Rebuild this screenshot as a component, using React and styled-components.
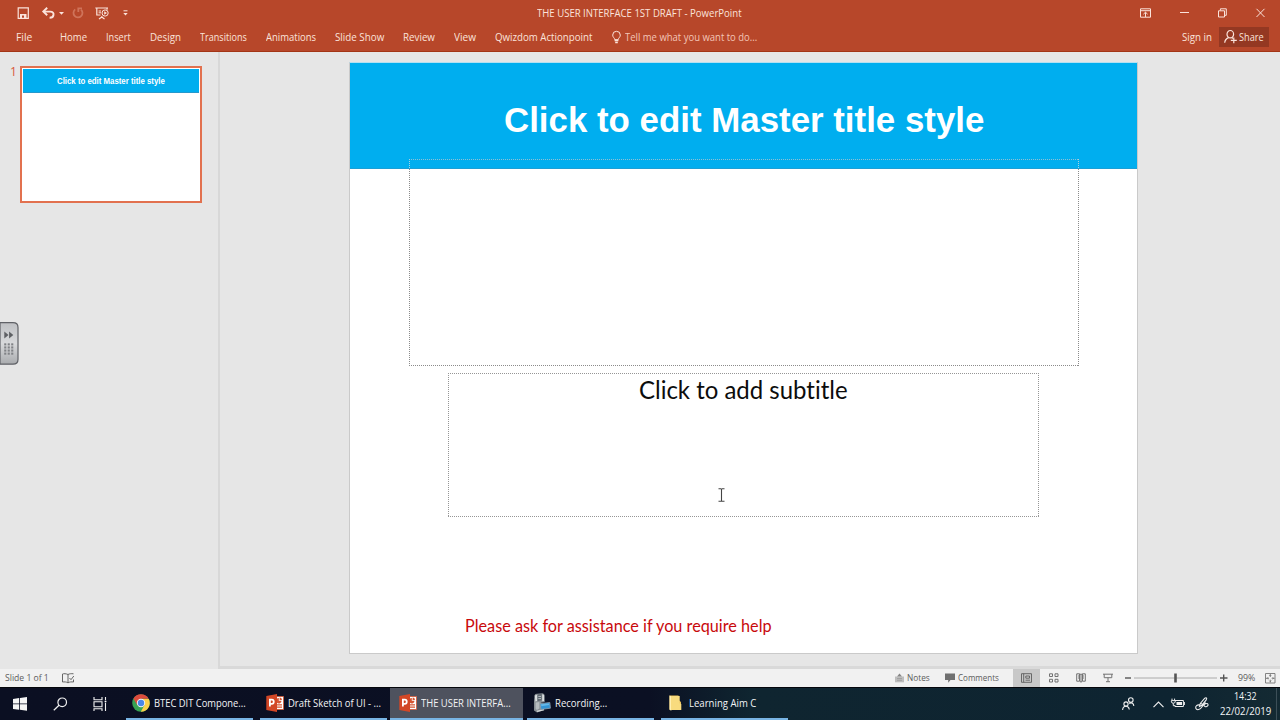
import React, { useLayoutEffect, useRef, useState } from "react";
import styled, { createGlobalStyle } from "styled-components";

const ui = '"Open Sans", "Noto Sans", sans-serif';
const slideFont = 'Lato, "Open Sans", sans-serif';

const GlobalStyle = createGlobalStyle`
  * { box-sizing: border-box; }
  body { margin: 0; overflow: hidden; font-family: ${ui}; font-variant-ligatures: none; }
  svg { display: block; flex: none; overflow: visible; }
`;

/* ---------- text that fills a given width ---------- */
const FitBox = styled.span`
  display: block;
  flex: none;
  width: ${(p) => p.$w}px;
  white-space: nowrap;
  font-family: ${(p) => p.$font || "inherit"};
  font-size: ${(p) => p.$size || 11}px;
  font-weight: ${(p) => p.$weight || 400};
  color: ${(p) => p.$color || "inherit"};
  line-height: ${(p) => p.$lh || 16}px;
`;
const FitInner = styled.span`
  display: inline-block;
  transform-origin: 0 50%;
`;
function Fit({ w, size, color, font, weight, lh, children }) {
  const ref = useRef(null);
  const [scale, setScale] = useState(1);
  useLayoutEffect(() => {
    const measure = () => ref.current && setScale(w / ref.current.offsetWidth);
    measure();
    document.fonts?.ready.then(measure);
  }, [w, children]);
  return (
    <FitBox $w={w} $size={size} $color={color} $font={font} $weight={weight} $lh={lh}>
      <FitInner ref={ref} style={{ transform: `scaleX(${scale})` }}>{children}</FitInner>
    </FitBox>
  );
}

/* ---------- frame ---------- */
const Screen = styled.div`
  width: 1280px;
  height: 720px;
  display: flex;
  flex-direction: column;
  overflow: hidden;
  background: #e6e6e6;
`;
const Header = styled.header`
  height: 52px;
  flex: none;
  background: #b7472a;
  border-bottom: 1px solid #a33516;
  color: #fbe3db;
`;
const TitleBar = styled.div`
  height: 26px;
  display: grid;
  grid-template-columns: 537px 1fr auto;
  align-items: center;
`;
const QuickAccess = styled.div`
  display: flex;
  align-items: center;
  padding-left: 17px;
`;
const WindowButtons = styled.div`
  display: flex;
  align-items: center;
  gap: 29px;
  padding-right: 15px;
`;
const Ribbon = styled.nav`
  height: 22px;
  display: flex;
  align-items: center;
  padding: 0 11px 0 16px;
`;
const Tabs = styled.div`
  display: flex;
  gap: 19px;
  margin-left: 28px;
`;
const TellMe = styled.div`
  display: flex;
  align-items: center;
  gap: 4px;
  margin-left: 20px;
`;
const Account = styled.div`
  display: flex;
  align-items: center;
  gap: 7px;
  margin-left: auto;
`;
const ShareButton = styled.div`
  display: flex;
  align-items: center;
  gap: 2px;
  width: 50px;
  height: 20px;
  padding-left: 5px;
  background: #943822;
`;

/* ---------- workspace ---------- */
const Workspace = styled.main`
  flex: 1;
  min-height: 0;
  display: flex;
`;
const Outline = styled.aside`
  position: relative;
  width: 220px;
  flex: none;
  display: flex;
  align-items: flex-start;
  gap: 4px;
  padding: 14px 0 0 10px;
  border-right: 2px solid #d8d8d8;
`;
const SlideNumber = styled.span`
  width: 6px;
  color: #d9583a;
  font: 12px/12px "Open Sans", sans-serif;
`;
const Thumb = styled.div`
  width: 182px;
  height: 137px;
  border: 2px solid #e2714f;
  background: #fff;
  padding: 1px 1px 0;
`;
const ThumbTitle = styled.div`
  display: flex;
  justify-content: center;
  height: 24px;
  padding-top: 7px;
  background: #00aeef;
  border-bottom: 1px solid #2698cc;
`;
const SideHandle = styled.div`
  position: absolute;
  left: 0;
  top: 270px;
`;
const Stage = styled.section`
  flex: 1;
  padding: 10px 0 0 129px;
  border-bottom: 3px solid #d9d9d9;
`;
const Slide = styled.article`
  position: relative;
  width: 789px;
  height: 592px;
  border: 1px solid #cacaca;
  border-top-color: #b4e0f2;
  background: #fff;
`;
const SlideTitle = styled.div`
  display: flex;
  justify-content: center;
  height: 106px;
  padding-top: 37px;
  background: #00aeef;
  border-bottom: 1px solid #1a9fd6;
`;
const Placeholder = styled.div`
  position: absolute;
  left: ${(p) => p.$x}px;
  top: ${(p) => p.$y}px;
  width: ${(p) => p.$w}px;
  height: ${(p) => p.$h}px;
  display: flex;
  justify-content: center;
`;
const Outlined = styled.svg`
  position: absolute;
  inset: 0;
`;
const Footnote = styled.div`
  position: absolute;
  left: 115px;
  top: 553px;
`;
const Pointer = styled.div`
  position: absolute;
  left: 368px;
  top: 425px;
`;

/* ---------- status bar ---------- */
const StatusBar = styled.footer`
  height: 18px;
  flex: none;
  display: flex;
  align-items: center;
  background: #f1f1f1;
  color: #5c5c5c;
  padding-left: 5px;
`;
const StatusItem = styled.div`
  display: flex;
  align-items: center;
  gap: ${(p) => p.$gap || 4}px;
  margin-left: ${(p) => p.$ml}px;
`;
const ViewButton = styled.div`
  display: flex;
  align-items: center;
  justify-content: center;
  width: 27px;
  height: 18px;
  background: ${(p) => (p.$active ? "#c8c8c8" : "transparent")};
`;

/* ---------- task bar ---------- */
const TaskBar = styled.footer`
  height: 33px;
  flex: none;
  display: flex;
  border-top: 1px solid #05070c;
  background: linear-gradient(90deg, #0b0f22 0, #0b1023 650px, #0f2530 750px, #0e2431 1180px, #142a33 1280px);
  color: #f2f4f6;
`;
const SystemButtons = styled.div`
  display: flex;
  align-items: center;
  width: 126px;
  padding-left: 13px;
`;
const Task = styled.div`
  display: flex;
  align-items: center;
  gap: ${(p) => p.$gap}px;
  width: ${(p) => p.$w}px;
  margin-right: ${(p) => p.$mr}px;
  padding-left: ${(p) => p.$pl}px;
  background: ${(p) => (p.$active ? "#4e525e" : "transparent")};
  border-bottom: 2px solid #78b4e4;
`;
const Tray = styled.div`
  display: flex;
  align-items: center;
  margin-left: auto;
  padding-right: 5px;
  border-right: 1px solid #3c4f58;
  margin-right: 3px;
`;
const Clock = styled.div`
  display: flex;
  flex-direction: column;
  align-items: center;
  margin-left: 11px;
  padding-bottom: 2px;
`;
const Space = styled.span`
  flex: none;
  width: ${(p) => p.$w}px;
`;

/* ---------- icons ---------- */
const Ico = ({ w, h, children, c = "#fbe3db", sw = 1 }) => (
  <svg width={w} height={h} viewBox={`0 0 ${w} ${h}`} fill="none" stroke={c} strokeWidth={sw}>{children}</svg>
);
const SaveIcon = () => (
  <Ico w={12} h={12} sw={1.2}>
    <path d="M1.2 .8H11.3V11.3H1.2Z" />
    <path d="M3 7H9.5V11H7V8.6H5V11H3Z" fill="#fbe3db" stroke="none" />
  </Ico>
);
const UndoIcon = () => (
  <Ico w={13} h={12}>
    <path d="M2 4.6H8.2C10.8 4.6 11.8 6 11.5 7.8C11.3 9.6 9.8 10.8 7.6 10.8" strokeWidth="1.9" />
    <path d="M5.2 .8L1.3 4.5L5.2 8.3" strokeWidth="1.9" />
  </Ico>
);
const RedoIcon = () => (
  <Ico w={12} h={12} c="#cf735a" sw={1.8}>
    <path d="M3.2 2.4A4.5 4.5 0 1 0 9 2.6" />
    <path d="M6.3 5V1.3H10" />
  </Ico>
);
const ShowIcon = () => (
  <Ico w={14} h={13}>
    <path d="M.3 1H13M1.8 1.4V8H5.5M12 1.4V2.8M6.8 9V11M4 12L6.8 10L9.5 12" strokeWidth="1.2" />
    <circle cx="10.1" cy="6" r="3.1" />
    <path d="M9.2 4.2L12 6L9.2 7.8Z" fill="#fbe3db" stroke="none" />
    <path d="M3.6 4H6M3.6 5.8H6" />
  </Ico>
);
const MoreIcon = () => (
  <Ico w={5} h={6}>
    <path d="M.5 .8H4.5" />
    <path d="M.3 3H4.7L2.5 5.4Z" fill="#fbe3db" stroke="none" />
  </Ico>
);
const BulbIcon = () => (
  <Ico w={9} h={13}>
    <path d="M2.8 8.7C2.7 7 .7 6.3 .7 4.1A3.8 3.8 0 0 1 8.3 4.1C8.3 6.3 6.3 7 6.2 8.7Z" />
    <path d="M2.6 9.6H6.4M3.2 11.4H5.8" strokeWidth="1.5" />
  </Ico>
);
const ShareIcon = () => (
  <Ico w={13} h={14} sw={1.2}>
    <ellipse cx="6.3" cy="4.2" rx="3.3" ry="3.7" />
    <path d="M.7 12.8C.9 10 2.3 8.6 4.5 7.6M7.8 7.5L9 8.4M9.8 7.5V13.3M6.8 10.4H12.8" />
  </Ico>
);
const PptIcon = () => (
  <svg width="18" height="18" viewBox="0 0 18 18">
    <path d="M9 2.5H17.5V15.5H9Z" fill="#fff" stroke="#d65532" strokeWidth=".8" />
    <path d="M11 10.9H16M11 13.1H16" stroke="#d65532" strokeWidth="1.1" fill="none" />
    <path d="M11 4.4A2.7 2.7 0 0 1 12.8 4V6.7H15.5A2.7 2.7 0 0 1 11 8.8Z" fill="#d65532" />
    <path d="M13.6 3.6A2.5 2.5 0 0 1 16 5.9H13.6Z" fill="#d65532" />
    <path d="M.3 2.1L11 0V18L.3 15.9Z" fill="#d24726" />
    <path d="M3.9 12.6V5.6H5.8C8.4 5.6 8.4 9.8 5.8 9.8H4" fill="none" stroke="#fff" strokeWidth="1.8" />
  </svg>
);
const ChromeIcon = () => (
  <svg width="18" height="18" viewBox="0 0 18 18">
    <circle cx="9" cy="9" r="8.8" fill="#38a353" />
    <path d="M9 5H16.8A8.8 8.8 0 0 1 8.8 17.8L12.5 11Z" fill="#fbd04b" />
    <path d="M1.4 4.6L5.4 11.2L9 9L9 4.8H16.7A8.8 8.8 0 0 0 1.4 4.6Z" fill="#de4b3d" />
    <circle cx="9" cy="9" r="4.2" fill="#f3f3f3" />
    <circle cx="9" cy="9" r="3.2" fill="#4a87e8" />
  </svg>
);
const RecorderIcon = () => (
  <svg width="18" height="20" viewBox="0 0 18 20">
    <path d="M1.5 2.2Q2 .8 4 .8L9.5 .3Q11.5 .5 11.7 2.5V9L8 9.8V14.5L11.5 17L4 19.5L1 17.5V8Z" fill="#878e93" />
    <path d="M4.8 1.5L8.6 1.1V7.3L4.8 7.9Z" fill="#59636c" />
    <path d="M1.8 2.5L4 1.8V8L2.4 8.6ZM9.2 1.3L11 2V8L9.2 8.3Z" fill="#d9dddf" />
    <path d="M5.3 3.4H8M5.3 5.6H8" stroke="#c4cacd" strokeWidth=".9" />
    <path d="M2.6 9.6L6.4 9V15.6L3.8 17L2.6 15.5Z" fill="#b5bbbe" />
    <path d="M4 18.4L11 16.7" stroke="#d4d8d8" strokeWidth="1.3" />
    <path d="M7 10.7L16.8 9.5L17.4 15.2L8 16.5Z" fill="#3394d4" stroke="#8fa0ac" strokeWidth=".8" />
    <path d="M8 11.3L16 10.4V12L8.4 13.3Z" fill="#64b8e8" />
  </svg>
);
const FolderIcon = () => (
  <svg width="13" height="16" viewBox="0 0 13 16">
    <path d="M.5 .5H9.5V5L12 7V14.5H.5Z" fill="#e9bd55" />
    <path d="M.5 .5L2.3 1.2V15.8L.5 14.7Z" fill="#fff0b4" />
    <path d="M2 1H10.7V8.2L12.3 9V15H2Z" fill="#f8db7e" />
  </svg>
);
const HandleIcon = () => (
  <svg width="19" height="43" viewBox="0 0 19 43">
    <defs>
      <linearGradient id="handle" x1="0" y1="0" x2="0" y2="1">
        <stop offset="0" stopColor="#bfc1c4" /><stop offset=".5" stopColor="#d8d9db" /><stop offset="1" stopColor="#a9abae" />
      </linearGradient>
    </defs>
    <path d="M0 .7H13Q18 .7 18 5.5V37.5Q18 42.2 13 42.2H0Z" fill="url(#handle)" stroke="#606267" strokeWidth="1.2" />
    <path d="M4.3 9.5L8.5 13L4.3 16.5ZM9.1 9.5L13.3 13L9.1 16.5Z" fill="#5e6064" />
    {[22, 25.1, 28.2, 31.3].map((y) => [4.2, 7.7, 11.2].map((x) => <rect key={`${x}-${y}`} x={x} y={y - .7} width="2.1" height="2.1" fill="#808286" />))}
  </svg>
);

const TABS = [["Home", 27], ["Insert", 25], ["Design", 31], ["Transitions", 47], ["Animations", 50], ["Slide Show", 49], ["Review", 32], ["View", 22], ["Qwizdom Actionpoint", 97]];
const TASKS = [
  { text: "BTEC DIT Compone...", w: 127, tw: 92, pl: 6, gap: 4, mr: 7, icon: <ChromeIcon /> },
  { text: "Draft Sketch of UI - ...", w: 127, tw: 93, pl: 6, gap: 4, mr: 3, icon: <PptIcon /> },
  { text: "THE USER INTERFA...", w: 133, tw: 90, pl: 9, gap: 4, mr: 4, icon: <PptIcon />, active: true },
  { text: "Recording...", w: 127, tw: 52, pl: 6, gap: 4, mr: 7, icon: <RecorderIcon /> },
  { text: "Learning Aim C", w: 127, tw: 67, pl: 8, gap: 7, mr: 0, icon: <FolderIcon /> },
];

/* Dotted frame: every other pixel is painted along each edge; `over` is the height that lies on the title band */
const DottedFrame = ({ w, h, color, over = 0 }) => (
  <Outlined width={w} height={h} fill="none" stroke={color} strokeDasharray="1 1" shapeRendering="crispEdges">
    <path d={`M0 .5H${w}`} stroke={over ? "#8fc0d4" : color} />
    {over > 0 && <path d={`M.5 0V${over}M${w - 0.5} 0V${over}`} stroke="#a9d3e3" />}
    <path d={`M.5 ${over}V${h}`} />
    <path d={`M${w - 0.5} ${over}V${h}`} />
    <path d={`M0 ${h - 0.5}H${w}`} />
  </Outlined>
);

export default function App() {
  return (
    <Screen>
      <GlobalStyle />
      <Header>
        <TitleBar>
          <QuickAccess>
            <SaveIcon /><Space $w={13} /><UndoIcon /><Space $w={4} />
            <Ico w={5} h={3}><path d="M0 0H5L2.5 2.7Z" fill="#fbe3db" stroke="none" /></Ico>
            <Space $w={8} /><RedoIcon /><Space $w={11} /><ShowIcon /><Space $w={14} />
            <MoreIcon />
          </QuickAccess>
          <Fit w={205} size={10.8}>THE USER INTERFACE 1ST DRAFT - PowerPoint</Fit>
          <WindowButtons>
            <Ico w={11} h={10}><path d="M.5 .8H10.5V9.2H.5ZM.5 2.7H10.5M5.5 9V4.3M3.4 6.2L5.5 4.2L7.6 6.2" /></Ico>
            <Ico w={9} h={10}><path d="M0 4.5H9" /></Ico>
            <Ico w={9} h={10}><path d="M.5 2.8H6.5V9H.5ZM2.4 2.5V.8H8.3V7.3H6.8" /></Ico>
            <Ico w={9} h={10}><path d="M.5 .8L8.5 9M8.5 .8L.5 9" /></Ico>
          </WindowButtons>
        </TitleBar>
        <Ribbon>
          <Fit w={16}>File</Fit>
          <Tabs>{TABS.map(([t, w]) => <Fit key={t} w={w}>{t}</Fit>)}</Tabs>
          <TellMe><BulbIcon /><Fit w={132} color="#f3c5b7">Tell me what you want to do...</Fit></TellMe>
          <Account>
            <Fit w={30}>Sign in</Fit>
            <ShareButton><ShareIcon /><Fit w={25}>Share</Fit></ShareButton>
          </Account>
        </Ribbon>
      </Header>

      <Workspace>
        <Outline>
          <SlideNumber>1</SlideNumber>
          <Thumb>
            <ThumbTitle>
              <Fit w={108} size={8.2} weight={700} color="#fff" font='"Liberation Sans", sans-serif' lh={12}>Click to edit Master title style</Fit>
            </ThumbTitle>
          </Thumb>
          <SideHandle><HandleIcon /></SideHandle>
        </Outline>
        <Stage>
          <Slide>
            <SlideTitle>
              <Fit w={480} size={35} weight={700} color="#fff" font='"Liberation Sans", sans-serif' lh={40}>Click to edit Master title style</Fit>
            </SlideTitle>
            <Placeholder $x={59} $y={96} $w={670} $h={207}>
              <DottedFrame w={670} h={207} color="#8b8b8b" over={10} />
            </Placeholder>
            <Placeholder $x={98} $y={310} $w={591} $h={144}>
              <DottedFrame w={591} h={144} color="#969696" />
              <Fit w={209} size={25} color="#0c0c0c" font={slideFont} lh={32}>Click to add subtitle</Fit>
            </Placeholder>
            <Pointer>
              <Ico w={7} h={14} c="#444"><path d="M.5 .7H2.8L3.5 1.3L4.2 .7H6.5M3.5 1.3V12.7M.5 13.3H2.8L3.5 12.7L4.2 13.3H6.5" strokeWidth="1.1" /></Ico>
            </Pointer>
            <Footnote>
              <Fit w={307} size={16.6} color="#c8090c" font={slideFont} lh={21}>Please ask for assistance if you require help</Fit>
            </Footnote>
          </Slide>
        </Stage>
      </Workspace>

      <StatusBar>
        <Fit w={44} size={9}>Slide 1 of 1</Fit>
        <StatusItem $ml={13}>
          <Ico w={12} h={11} c="#666"><path d="M6 9V1.5C4 .6 2 .5 .5 1V9C2.5 8.8 4.2 8.8 6 9.8C7.8 8.8 9.5 8.8 11.5 9V6.5M6 1.5C7.5 .7 9 .5 11.5 .8M7.5 5L9 6.7L11.8 3" /></Ico>
        </StatusItem>
        <StatusItem $ml={821} $gap={3}>
          <Ico w={9} h={10} c="none"><path d="M0 3.5H9V9.3H0Z" fill="#bdbdbd" /><path d="M2 3.5L4.5 .5L7 3.5Z" fill="#858585" /><path d="M2 5.5H7M2 7.3H7" stroke="#a2a2a2" /></Ico>
          <Fit w={23} size={9}>Notes</Fit>
        </StatusItem>
        <StatusItem $ml={15} $gap={3}>
          <Ico w={10} h={10} c="none"><path d="M0 .5H10V7H5.5L3.2 9.7V7H0Z" fill="#707070" /></Ico>
          <Fit w={41} size={9}>Comments</Fit>
        </StatusItem>
        <Space $w={14} />
        <ViewButton $active><Ico w={11} h={10} c="#5c5c5c"><path d="M.5 .7H10.5V9.3H.5ZM2.7 .7V9.3M4.8 3H8.5V5.2H4.8ZM4.5 7.2H9" strokeWidth=".9" /></Ico></ViewButton>
        <ViewButton><Ico w={10} h={10} c="#727272"><path d="M.5 .8H3.5V3.5H.5ZM6 .8H9V3.5H6ZM.5 6.3H3.5V9H.5ZM6 6.3H9V9H6Z" /></Ico></ViewButton>
        <ViewButton><Ico w={10} h={10} c="#727272"><path d="M5 1.5L3.5 .8H.7V8.2H3.5L5 9.2L6.5 8.2H9.3V.8H6.5ZM5 1.5V9M2 3H3.7M2 5H3.7M6.3 3H8M6.3 5H8M3.5 1V8M6.5 1V8" /></Ico></ViewButton>
        <ViewButton><Ico w={10} h={10} c="#727272"><path d="M0 1.2H10M1.2 1.2V4.7H8.8V1.2M5 4.7V8.5M3 8.7H7" /></Ico></ViewButton>
        <Space $w={4} />
        <Ico w={101} h={11} c="#777"><path d="M0 5H6" stroke="#555" strokeWidth="1.4" /><path d="M9 5H92" stroke="#aaa" /><path d="M50.5 .5V9.5" stroke="#555" strokeWidth="2.6" /><path d="M95 5H102.5M98.7 1.5V8.5" stroke="#555" strokeWidth="1.4" /></Ico>
        <Space $w={12} />
        <Fit w={17} size={8.8}>99%</Fit>
        <Space $w={10} />
        <Ico w={11} h={11} c="#777"><path d="M.5 .5H10V10H.5ZM5.3 1V4M5.3 6.7V9.5M1 5.3H4M6.7 5.3H9.5M4.3 3L5.3 2L6.3 3M4.3 7.7L5.3 8.7L6.3 7.7M3 4.3L2 5.3L3 6.3M7.7 4.3L8.7 5.3L7.7 6.3" strokeWidth=".9" /></Ico>
      </StatusBar>

      <TaskBar>
        <SystemButtons>
          <Ico w={14} h={14} c="none"><path d="M0 2L6.2 1.1V6.5H0ZM7 1L14 0V6.5H7ZM0 7.3H6.2V12.7L0 11.9ZM7 7.3H14V13.8L7 12.8Z" fill="#f5f5f5" /></Ico>
          <Space $w={26} />
          <Ico w={15} h={14} c="#f1f1f1" sw={1.2}><circle cx="9.2" cy="5.3" r="4.3" /><path d="M6 8.3L.8 13.3" /></Ico>
          <Space $w={25} />
          <Ico w={14} h={14} c="#f1f1f1" sw={1.1}><path d="M1 0V2.7H9V0M1 4.7H9V9.8H1ZM1 14V11.8H9V14M12.5 0V3M12.5 6V14" /><circle cx="12.5" cy="4.6" r="1" fill="#fff" stroke="none" /></Ico>
        </SystemButtons>
        {TASKS.map((t) => (
          <Task key={t.text} $w={t.w} $pl={t.pl} $gap={t.gap} $mr={t.mr} $active={t.active}>
            {t.icon}<Fit w={t.tw}>{t.text}</Fit>
          </Task>
        ))}
        <Tray>
          <Ico w={13} h={14} c="#eee" sw={1.1}><circle cx="8.8" cy="3.1" r="2.3" /><circle cx="4" cy="7" r="2.1" /><path d="M.6 13C.8 10.5 2.3 9.3 4 9.3S7 10.5 7.3 12.5M7.2 6.4C9.7 5 11.8 6.7 11.8 9" /></Ico>
          <Space $w={18} />
          <Ico w={11} h={7} c="#eee" sw={1.1}><path d="M.5 6.2L5.5 1L10.5 6.2" /></Ico>
          <Space $w={7} />
          <Ico w={14} h={10} c="#eee"><path d="M4 1.5H12.4V7.5H4V6.3M13.4 3V6" /><path d="M5.5 3H11V6H5.5Z" fill="#eee" stroke="none" /><path d="M1 -.4V1.4M3.6 -.4V1.4M.4 1.6H4.2V2.9C4.2 4.7 .4 4.7 .4 2.9ZM2.3 4.4V6.7H4" /></Ico>
          <Space $w={10} />
          <Ico w={14} h={14} c="#eee" sw={1.1}><path d="M4.5 9.5L5.3 6.5L9.8 1.2C11.2 .2 12.2 1.2 11.4 2.6L7 8.2ZM6 6.3L7.5 7.6M5 8C2 7.3 .2 9.4 .8 11.3C1.8 13.8 5.2 12.7 7 9.8C8.4 7.4 11.3 5.8 12.7 6.8C14 8 12 10.4 10 9.6C8.3 8.9 9.2 7 10.6 5.6" /></Ico>
          <Clock><Fit w={23} size={10.8} lh={15}>14:32</Fit><Fit w={51} size={10.8} lh={15}>22/02/2019</Fit></Clock>
        </Tray>
      </TaskBar>
    </Screen>
  );
}
